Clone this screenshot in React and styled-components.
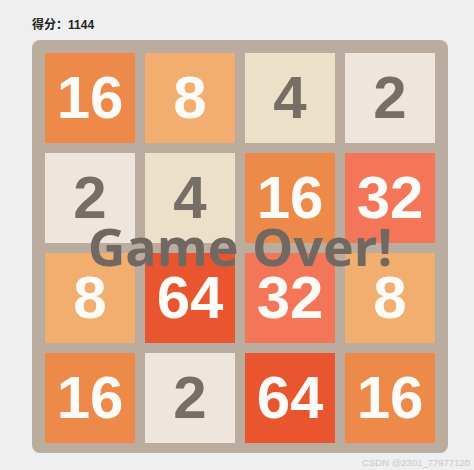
import React from "react"
import styled, { createGlobalStyle } from "styled-components"

const board = [
  [16, 8, 4, 2],
  [2, 4, 16, 32],
  [8, 64, 32, 8],
  [16, 2, 64, 16],
]

const tileColors = {
  2: { bg: "#eee6dc", fg: "#776e65" },
  4: { bg: "#ece0c8", fg: "#776e65" },
  8: { bg: "#f2ae6e", fg: "#fdfbf8" },
  16: { bg: "#ed8a4a", fg: "#fdfbf8" },
  32: { bg: "#f27657", fg: "#fdfbf8" },
  64: { bg: "#e9552f", fg: "#fdfbf8" },
}

export default function App() {
  return (
    <>
      <GlobalStyle />
      <Page>
        <Score>得分：<b>1144</b></Score>
        <Board>
          <Grid>
            {board.flat().map((v, i) => (
              <Tile key={i} $value={v}>
                {v}
              </Tile>
            ))}
          </Grid>
          <Overlay>Game Over!</Overlay>
        </Board>
        <Watermark>CSDN @2301_77977120</Watermark>
      </Page>
    </>
  )
}

const GlobalStyle = createGlobalStyle`
  html, body {
    margin: 0;
    padding: 0;
    background: #efefef;
  }
`

const Page = styled.div`
  width: 474px;
  height: 470px;
  padding: 16px 0 0 32px;
  box-sizing: border-box;
  position: relative;
`

const Score = styled.div`
  font-family: "Noto Sans CJK SC", "Liberation Sans", sans-serif;
  font-size: 12px;
  font-weight: 700;
  color: #222;
  height: 16px;
  line-height: 16px;
  margin-bottom: 8px;

  b {
    font-family: "Liberation Sans", Arial, sans-serif;
  }
`

const Board = styled.div`
  position: relative;
  width: 416px;
  height: 413px;
  padding: 13px 13px 10px;
  box-sizing: border-box;
  background: #baada0;
  border-radius: 8px;
`

const Grid = styled.div`
  display: grid;
  grid-template-columns: repeat(4, 90px);
  grid-auto-rows: 90px;
  gap: 10px;
`

const Tile = styled.div`
  display: flex;
  align-items: center;
  justify-content: center;
  background: ${(p) => tileColors[p.$value].bg};
  color: ${(p) => tileColors[p.$value].fg};
  font-family: "Liberation Sans", Arial, sans-serif;
  font-weight: 700;
  font-size: 60px;
  line-height: 1;
`

const Overlay = styled.div`
  position: absolute;
  left: 0;
  right: 0;
  top: 176px;
  text-align: center;
  font-family: "Open Sans", sans-serif;
  font-weight: 700;
  font-size: 52px;
  color: #716961;
  line-height: 60px;
`

const Watermark = styled.div`
  position: absolute;
  right: 4px;
  bottom: 2px;
  font-family: "Liberation Sans", Arial, sans-serif;
  font-size: 9.5px;
  color: #c9c9c9;
`
